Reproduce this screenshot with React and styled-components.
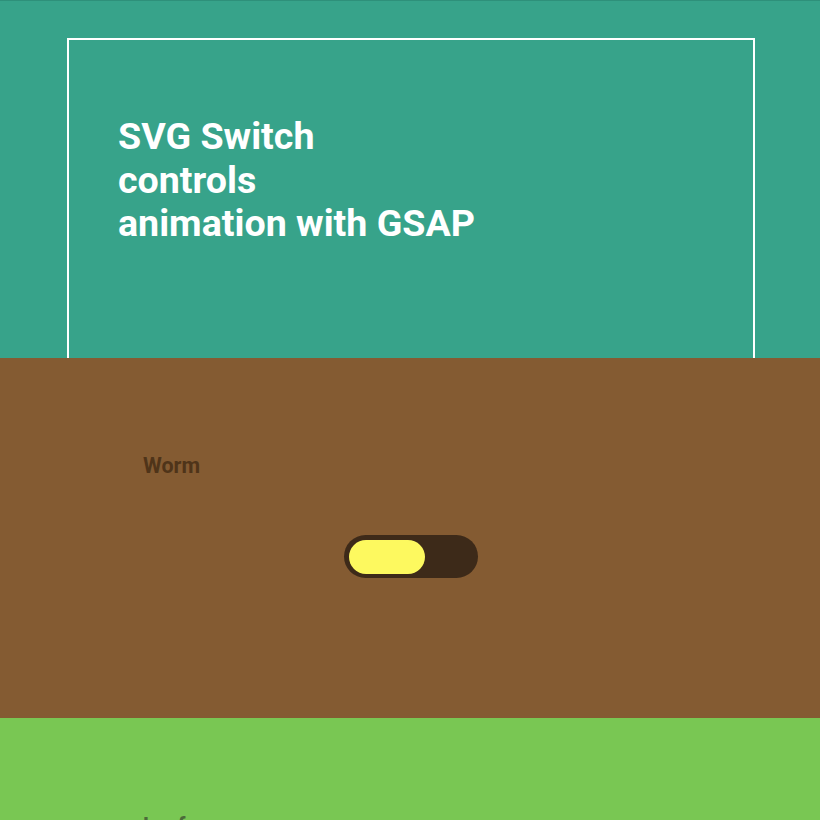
import React, { useState } from "react";
import styled, { createGlobalStyle } from "styled-components";

const GlobalStyle = createGlobalStyle`
	body {
		margin: 0;
		font-family: Roboto, "Liberation Sans", sans-serif;
	}
`;

const Hero = styled.header`
	height: 358px;
	box-sizing: border-box;
	padding: 37px 65px 0 67px;
	background: #37a38a;
	border-top: 1px solid #2e907a;
	overflow: hidden;
`;

const Frame = styled.div`
	height: 400px;
	box-sizing: border-box;
	border: 2px solid #fff;
	padding: 75px 49px 0;
`;

const Title = styled.h1`
	margin: 0;
	color: #fff;
	font-size: 37.6px;
	font-weight: 700;
	line-height: 43.5px;
`;

const Section = styled.section`
	height: 360px;
	box-sizing: border-box;
	padding: 95px 141px 0 143px;
	background: ${(p) => p.bg};
	display: flex;
	flex-direction: column;
	overflow: hidden;
`;

const Label = styled.h2`
	margin: 0;
	font-size: 21.5px;
	font-weight: 700;
	color: ${(p) => p.color};
`;

const Track = styled.button`
	align-self: center;
	margin-top: 57px;
	width: 134px;
	height: 43px;
	box-sizing: border-box;
	padding: 4px 5px;
	border: none;
	border-radius: 22px;
	background: #3d2a19;
	cursor: pointer;
	display: flex;
	justify-content: ${(p) => (p.on ? "flex-start" : "flex-end")};
	align-items: center;
`;

const Knob = styled.span`
	width: 76px;
	height: 34px;
	border-radius: 17px;
	background: #fdf95f;
`;

const Switch = () => {
	const [on, setOn] = useState(true);
	return (
		<Track on={on ? 1 : 0} onClick={() => setOn(!on)}>
			<Knob />
		</Track>
	);
};

const App = () => (
	<>
		<GlobalStyle />
		<Hero>
			<Frame>
				<Title>
					SVG Switch
					<br />
					controls
					<br />
					animation with GSAP
				</Title>
			</Frame>
		</Hero>
		<Section bg="#845b32">
			<Label color="#4f3419">Worm</Label>
			<Switch />
		</Section>
		<Section bg="#79c753">
			<Label color="#4c6b3a">Leaf</Label>
		</Section>
	</>
);

export default App;
